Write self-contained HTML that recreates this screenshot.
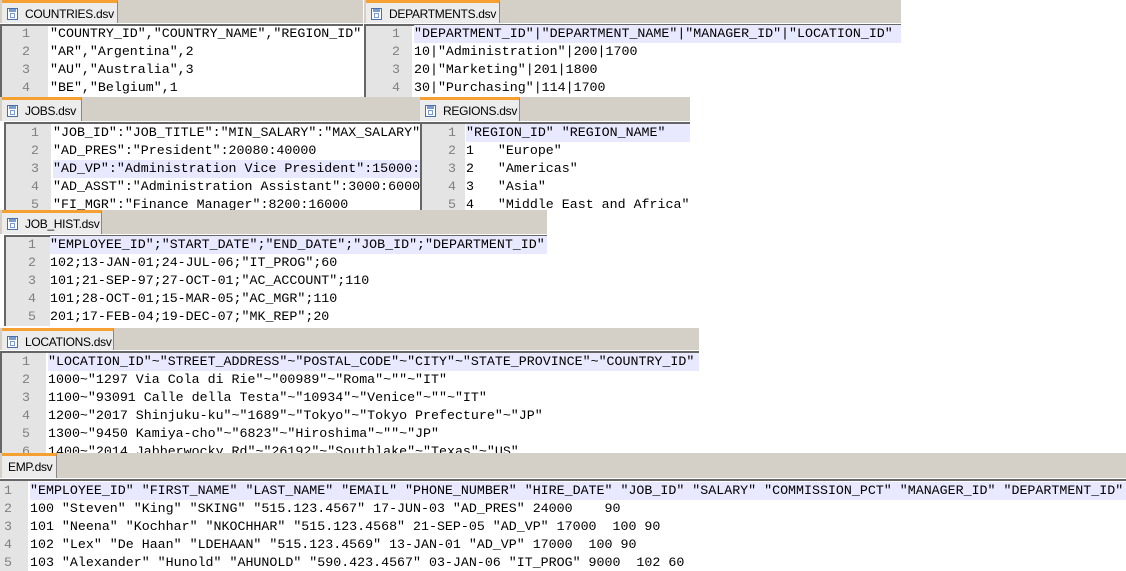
<!DOCTYPE html>
<html><head><meta charset="utf-8"><style>
body{margin:0;width:1126px;height:571px;background:#fff;position:relative;overflow:hidden;font-family:"Liberation Mono",monospace}
.p{position:absolute;overflow:hidden;background:#fff}
.bar{position:absolute;left:0;right:0;top:0;background:#d4d0c8}
.tab{position:absolute;left:2px;top:0;bottom:0;background:#ececec;border-top:3px solid #f5a030;border-right:1px solid #888;box-sizing:border-box;font-family:"Liberation Sans",sans-serif;font-size:12px;color:#000;padding:4px 6px 0 23px;white-space:nowrap;letter-spacing:-0.3px}
.tab.n{padding-left:6px}
.ic{position:absolute;left:5px;top:5px;width:11px;height:12px;border:1px solid #4a6fa5;background:#fff;box-sizing:border-box}
.ic:before{content:"";position:absolute;left:1px;right:1px;top:0;height:3px;background:#7a9cd0}
.ic:after{content:"";position:absolute;left:2px;right:2px;bottom:1px;height:3px;border:1px solid #7a9cd0}
.ed{position:absolute;left:0;right:0;bottom:0;border-top:1px solid #fff;box-shadow:inset 0 2px 0 #666, inset 2px 0 0 #666}
.g{position:absolute;top:2px;bottom:0;background:#e4e4e4}
.l{position:absolute;left:0;right:0;height:18px;font-size:13.3px;line-height:18px;white-space:pre;color:#000}
.l span{position:absolute;color:#808080;text-align:right}
.l b{font-weight:normal;position:absolute}
.hl{background:#e8e8ff}
</style></head><body>

<div class="p" style="left:0;top:0;width:363px;height:97px">
<div class="bar" style="height:23px"><div class="tab" style="width:116px"><i class="ic"></i>COUNTRIES.dsv</div></div>
<div class="ed" style="top:23px"><div class="g" style="left:2px;width:46px"></div>
<div class="l" style="top:1px"><span style="left:0;width:30px">1</span><b style="left:50px">"COUNTRY_ID","COUNTRY_NAME","REGION_ID"</b></div>
<div class="l" style="top:19px"><span style="left:0;width:30px">2</span><b style="left:50px">"AR","Argentina",2</b></div>
<div class="l" style="top:37px"><span style="left:0;width:30px">3</span><b style="left:50px">"AU","Australia",3</b></div>
<div class="l" style="top:55px"><span style="left:0;width:30px">4</span><b style="left:50px">"BE","Belgium",1</b></div>
</div></div>

<div class="p" style="left:364px;top:0;width:537px;height:97px">
<div class="bar" style="height:23px"><div class="tab" style="width:134px"><i class="ic"></i>DEPARTMENTS.dsv</div></div>
<div class="ed" style="top:23px"><div class="g" style="left:2px;width:46px"></div>
<div class="l hl" style="top:1px;left:50px"></div>
<div class="l" style="top:1px"><span style="left:0;width:36px">1</span><b style="left:50px">"DEPARTMENT_ID"|"DEPARTMENT_NAME"|"MANAGER_ID"|"LOCATION_ID"</b></div>
<div class="l" style="top:19px"><span style="left:0;width:36px">2</span><b style="left:50px">10|"Administration"|200|1700</b></div>
<div class="l" style="top:37px"><span style="left:0;width:36px">3</span><b style="left:50px">20|"Marketing"|201|1800</b></div>
<div class="l" style="top:55px"><span style="left:0;width:36px">4</span><b style="left:50px">30|"Purchasing"|114|1700</b></div>
</div></div>

<div class="p" style="left:0;top:97px;width:420px;height:113px">
<div class="bar" style="height:24px"><div class="tab" style="width:80px"><i class="ic"></i>JOBS.dsv</div></div>
<div class="ed" style="top:24px;left:4px"><div class="g" style="left:2px;width:45px"></div>
<div class="l" style="top:2px"><span style="left:0;width:35px">1</span><b style="left:49px">"JOB_ID":"JOB_TITLE":"MIN_SALARY":"MAX_SALARY"</b></div>
<div class="l" style="top:20px"><span style="left:0;width:35px">2</span><b style="left:49px">"AD_PRES":"President":20080:40000</b></div>
<div class="l hl" style="top:38px;left:49px"></div>
<div class="l" style="top:38px"><span style="left:0;width:35px">3</span><b style="left:49px">"AD_VP":"Administration Vice President":15000:</b></div>
<div class="l" style="top:56px"><span style="left:0;width:35px">4</span><b style="left:49px">"AD_ASST":"Administration Assistant":3000:6000</b></div>
<div class="l" style="top:74px"><span style="left:0;width:35px">5</span><b style="left:49px">"FI_MGR":"Finance Manager":8200:16000</b></div>
</div></div>

<div class="p" style="left:420px;top:97px;width:270px;height:113px">
<div class="bar" style="height:24px;left:0"><div class="tab" style="width:100px;left:0"><i class="ic"></i>REGIONS.dsv</div></div>
<div class="ed" style="top:24px"><div class="g" style="left:2px;width:43px"></div>
<div class="l hl" style="top:2px;left:46px"></div>
<div class="l" style="top:2px"><span style="left:0;width:36px">1</span><b style="left:46px">"REGION_ID" "REGION_NAME"</b></div>
<div class="l" style="top:20px"><span style="left:0;width:36px">2</span><b style="left:46px">1   "Europe"</b></div>
<div class="l" style="top:38px"><span style="left:0;width:36px">3</span><b style="left:46px">2   "Americas"</b></div>
<div class="l" style="top:56px"><span style="left:0;width:36px">4</span><b style="left:46px">3   "Asia"</b></div>
<div class="l" style="top:74px"><span style="left:0;width:36px">5</span><b style="left:46px">4   "Middle East and Africa"</b></div>
</div></div>

<div class="p" style="left:0;top:210px;width:547px;height:116px">
<div class="bar" style="height:24px"><div class="tab" style="width:100px"><i class="ic"></i>JOB_HIST.dsv</div></div>
<div class="ed" style="top:24px;left:4px"><div class="g" style="left:2px;width:44px"></div>
<div class="l hl" style="top:1px;left:46px"></div>
<div class="l" style="top:1px"><span style="left:0;width:32px">1</span><b style="left:46px">"EMPLOYEE_ID";"START_DATE";"END_DATE";"JOB_ID";"DEPARTMENT_ID"</b></div>
<div class="l" style="top:19px"><span style="left:0;width:32px">2</span><b style="left:46px">102;13-JAN-01;24-JUL-06;"IT_PROG";60</b></div>
<div class="l" style="top:37px"><span style="left:0;width:32px">3</span><b style="left:46px">101;21-SEP-97;27-OCT-01;"AC_ACCOUNT";110</b></div>
<div class="l" style="top:55px"><span style="left:0;width:32px">4</span><b style="left:46px">101;28-OCT-01;15-MAR-05;"AC_MGR";110</b></div>
<div class="l" style="top:73px"><span style="left:0;width:32px">5</span><b style="left:46px">201;17-FEB-04;19-DEC-07;"MK_REP";20</b></div>
</div></div>

<div class="p" style="left:0;top:328px;width:699px;height:125px">
<div class="bar" style="height:22px"><div class="tab" style="width:112px"><i class="ic"></i>LOCATIONS.dsv</div></div>
<div class="ed" style="top:22px"><div class="g" style="left:2px;width:44px"></div>
<div class="l hl" style="top:2px;left:48px"></div>
<div class="l" style="top:2px"><span style="left:0;width:30px">1</span><b style="left:48px">"LOCATION_ID"~"STREET_ADDRESS"~"POSTAL_CODE"~"CITY"~"STATE_PROVINCE"~"COUNTRY_ID"</b></div>
<div class="l" style="top:20px"><span style="left:0;width:30px">2</span><b style="left:48px">1000~"1297 Via Cola di Rie"~"00989"~"Roma"~""~"IT"</b></div>
<div class="l" style="top:38px"><span style="left:0;width:30px">3</span><b style="left:48px">1100~"93091 Calle della Testa"~"10934"~"Venice"~""~"IT"</b></div>
<div class="l" style="top:56px"><span style="left:0;width:30px">4</span><b style="left:48px">1200~"2017 Shinjuku-ku"~"1689"~"Tokyo"~"Tokyo Prefecture"~"JP"</b></div>
<div class="l" style="top:74px"><span style="left:0;width:30px">5</span><b style="left:48px">1300~"9450 Kamiya-cho"~"6823"~"Hiroshima"~""~"JP"</b></div>
<div class="l" style="top:92px"><span style="left:0;width:30px">6</span><b style="left:48px">1400~"2014 Jabberwocky Rd"~"26192"~"Southlake"~"Texas"~"US"</b></div>
</div></div>

<div class="p" style="left:0;top:453px;width:1126px;height:118px">
<div class="bar" style="height:25px"><div class="tab n" style="width:55px">EMP.dsv</div></div>
<div class="ed" style="top:25px;box-shadow:inset 0 2px 0 #666"><div class="g" style="left:0;width:28px"></div>
<div class="l hl" style="top:3px;left:30px"></div>
<div class="l" style="top:3px"><span style="left:0;width:12px">1</span><b style="left:30px">"EMPLOYEE_ID" "FIRST_NAME" "LAST_NAME" "EMAIL" "PHONE_NUMBER" "HIRE_DATE" "JOB_ID" "SALARY" "COMMISSION_PCT" "MANAGER_ID" "DEPARTMENT_ID"</b></div>
<div class="l" style="top:21px"><span style="left:0;width:12px">2</span><b style="left:30px">100 "Steven" "King" "SKING" "515.123.4567" 17-JUN-03 "AD_PRES" 24000    90</b></div>
<div class="l" style="top:39px"><span style="left:0;width:12px">3</span><b style="left:30px">101 "Neena" "Kochhar" "NKOCHHAR" "515.123.4568" 21-SEP-05 "AD_VP" 17000  100 90</b></div>
<div class="l" style="top:57px"><span style="left:0;width:12px">4</span><b style="left:30px">102 "Lex" "De Haan" "LDEHAAN" "515.123.4569" 13-JAN-01 "AD_VP" 17000  100 90</b></div>
<div class="l" style="top:75px"><span style="left:0;width:12px">5</span><b style="left:30px">103 "Alexander" "Hunold" "AHUNOLD" "590.423.4567" 03-JAN-06 "IT_PROG" 9000  102 60</b></div>
</div></div>
</body></html>
